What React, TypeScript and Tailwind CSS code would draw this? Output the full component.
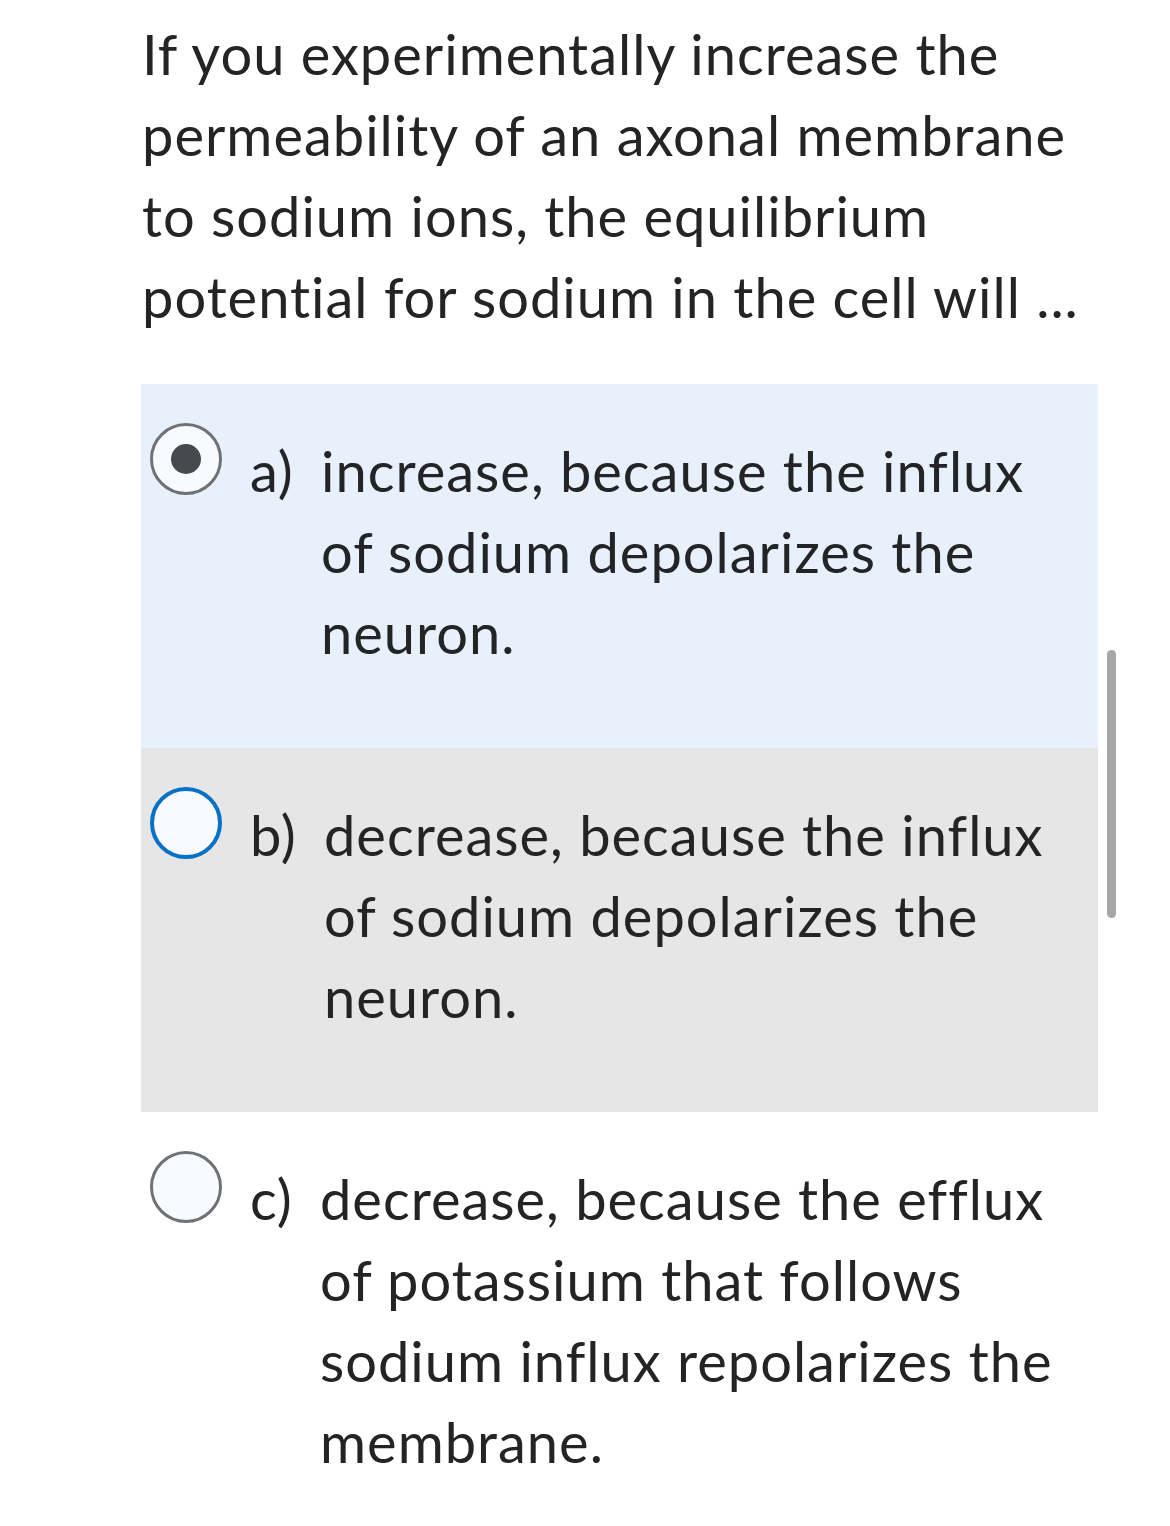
import React from 'react';

type Opt = { key: string; label: string; labelW: string; text: string; state: 'checked' | 'focus' | 'none'; bg: string };

const options: Opt[] = [
  { key: 'a', label: 'a)', labelW: 'w-[71px]', text: 'increase, because the influx of sodium depolarizes the neuron.', state: 'checked', bg: 'bg-[#e8f1fb]' },
  { key: 'b', label: 'b)', labelW: 'w-[74px]', text: 'decrease, because the influx of sodium depolarizes the neuron.', state: 'focus', bg: 'bg-[#e6e6e6]' },
  { key: 'c', label: 'c)', labelW: 'w-[70px]', text: 'decrease, because the efflux of potassium that follows sodium influx repolarizes the membrane.', state: 'none', bg: 'bg-white' },
];

const Radio = ({ state }: { state: Opt['state'] }) => {
  const border = state === 'focus' ? 'border-[4px] border-[#0770c7]' : 'border-[3px] border-[#6f7275]';
  return (
    <div className={`w-[72px] h-[72px] shrink-0 rounded-full bg-[#f8faff] flex items-center justify-center ${border}`}>
      {state === 'checked' && <div className="w-[30px] h-[30px] rounded-full bg-[#46494d]" />}
    </div>
  );
};

export default function App() {
  return (
    <div className="relative min-h-[1526px] bg-white text-[#222426]" style={{ fontFamily: 'Lato, "Open Sans", sans-serif' }}>
      <div className="pl-[141px] pr-[72px] pt-[13px]">
        <p className="text-[56px] leading-[81px] tracking-[1px] pl-[1px]">
          If you experimentally increase the permeability of an axonal membrane to sodium ions, the equilibrium potential for sodium in the cell will ...
        </p>
        <div className="mt-[47px]">
          {options.map(o => (
            <div key={o.key} className={`${o.bg} flex items-start pl-[9px] pr-[40px] pt-[46px] pb-[75px]`}>
              <div className="-mt-[7px]">
                <Radio state={o.state} />
              </div>
              <div className="flex text-[56px] leading-[81px] tracking-[1px] ml-[28px]">
                <span className={`${o.labelW} shrink-0`}>{o.label}</span>
                <span>{o.text}</span>
              </div>
            </div>
          ))}
        </div>
      </div>
      <div className="absolute left-[1107px] top-[650px] w-[9px] h-[268px] rounded-full bg-[#a6a6a6]" />
    </div>
  );
}
